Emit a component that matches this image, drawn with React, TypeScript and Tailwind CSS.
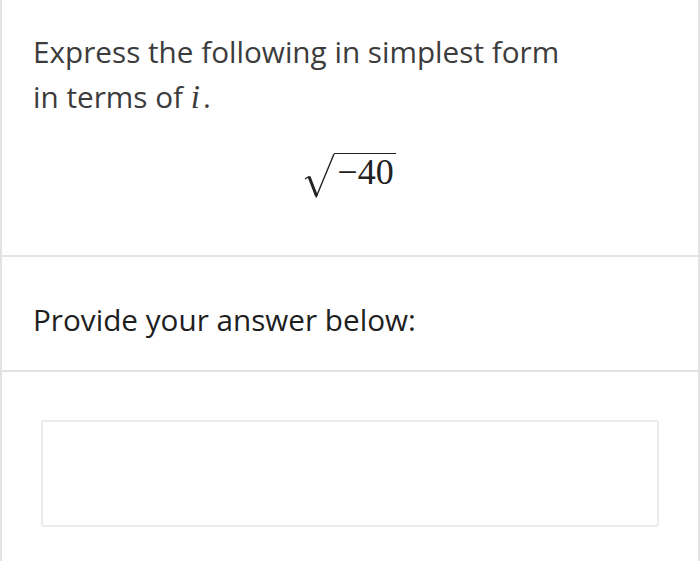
import React from "react";

export default function App() {
  return (
    <div className="w-[700px] h-[561px] bg-white border-l-2 border-r-2 border-[#e3e3e3] overflow-hidden" style={{ fontFamily: '"Open Sans", sans-serif' }}>
      <div className="pt-[29px] h-[257px] border-b-2 border-[#e3e3e3]">
        <p className="pl-[31px] text-[29.7px] leading-[45px] text-[#3c3c3c]">
          Express the following in simplest form
          <br />
          in terms of <span className="italic text-[33px] mr-[3px]" style={{ fontFamily: '"Liberation Serif", serif' }}>i</span>.
        </p>
        <div className="flex justify-center mt-[33px]">
          <div className="flex items-start text-[#222]" style={{ fontFamily: '"Liberation Serif", serif' }}>
            <svg width="31" height="47" viewBox="0 0 31 47" className="-mr-[1px]">
              <path d="M1 26 L5 23.5" fill="none" stroke="#222" strokeWidth="1.4" />
              <path d="M5 23.5 L12.5 43" fill="none" stroke="#222" strokeWidth="3" />
              <path d="M12 44.5 L30 1" fill="none" stroke="#222" strokeWidth="1.4" />
            </svg>
            <span className="border-t-[1.5px] border-[#222] text-[36px] leading-[36px] pl-[3px] pr-[2px]">−40</span>
          </div>
        </div>
      </div>
      <div className="h-[115px] border-b-2 border-[#e3e3e3] pl-[31px] pt-[40px]">
        <p className="text-[29.7px] leading-[45px] text-[#1e1e1e]">Provide your answer below:</p>
      </div>
      <div className="pt-[48px] pl-[39px] pr-[39px]">
        <div className="h-[107px] border-2 border-[#ececec] rounded-[3px]"></div>
      </div>
    </div>
  );
}
